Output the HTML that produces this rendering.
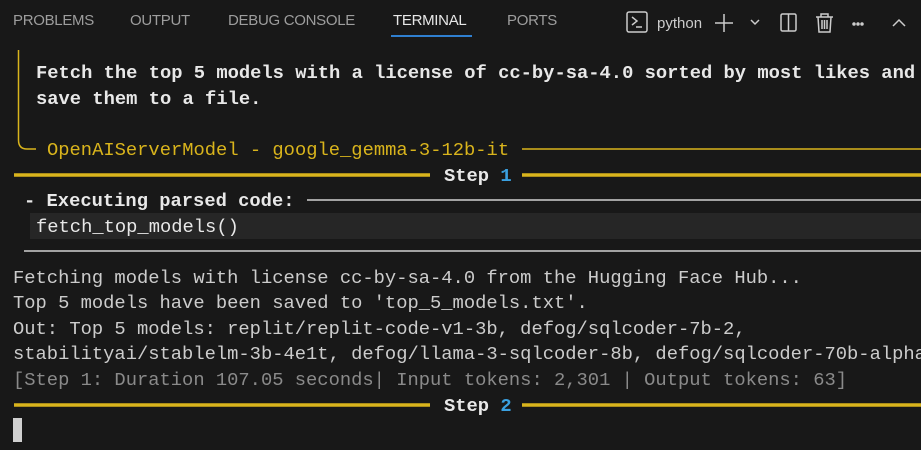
<!DOCTYPE html>
<html><head><meta charset="utf-8"><style>
body{margin:0;width:921px;height:447px;background:#181818;overflow:hidden;position:relative;font-family:"Liberation Mono",monospace;}
.t{position:absolute;font-family:"Liberation Sans",sans-serif;font-size:15px;color:#9d9d9d;top:12px;letter-spacing:-0.3px}
.l{position:absolute;white-space:pre;font-size:18.8px;line-height:25.6px;color:#cccccc;margin-top:2px}
.b{font-weight:bold;color:#e8e8e8}
.y{color:#d9b41c}
.h{position:absolute;}
</style></head><body>
<div class="t" style="left:13px">PROBLEMS</div>
<div class="t" style="left:130px">OUTPUT</div>
<div class="t" style="left:228px">DEBUG CONSOLE</div>
<div class="t" style="left:393px;color:#e7e7e7">TERMINAL</div>
<div class="h" style="left:391px;top:35px;width:81px;height:2px;background:#2f7fd0"></div>
<div class="t" style="left:507px">PORTS</div>
<svg class="h" style="left:625px;top:10px" width="290" height="26" viewBox="0 0 290 26" fill="none" stroke="#cccccc" stroke-width="1.5">
<rect x="2" y="2" width="20" height="20" rx="2"/><path d="M7 7l5 4-5 4M11 17h6"/>
<text x="32" y="18" fill="#cccccc" stroke="none" font-family="Liberation Sans" font-size="15">python</text>
<path d="M99 4v18M90 13h18"/><path d="M126 10l4 4 4-4"/>
<rect x="156" y="4" width="15" height="17" rx="1.5"/><path d="M163.5 4v17"/>
<path d="M191 7h17M196 7V4h7v3M193 7l1 15h11l1-15M197 10v9M199.5 10v9M202 10v9"/>
<circle cx="229" cy="14" r="1" fill="#ccc"/><circle cx="233" cy="14" r="1" fill="#ccc"/><circle cx="237" cy="14" r="1" fill="#ccc"/>
<path d="M268 16l6-6 6 6"/>
</svg>
<svg class="h" style="left:0;top:50px" width="921" height="400">
<path d="M18.5 0V90Q18.5 99 27 99H36" stroke="#d9b41c" stroke-width="1.5" fill="none"/>
<path d="M522 99H921" stroke="#d9b41c" stroke-width="1.5"/>
<path d="M14 125H430M522 125H921" stroke="#d9b41c" stroke-width="3.5"/>
<path d="M307 150H921" stroke="#d0d0d0" stroke-width="1.5"/>
<rect x="30" y="163" width="891" height="26" fill="#262626"/>
<path d="M24 201H921" stroke="#d0d0d0" stroke-width="1.5"/>
<path d="M14 355H430M522 355H921" stroke="#d9b41c" stroke-width="3.5"/>
<rect x="13" y="368" width="9" height="24" fill="#d0d0d0"/>
</svg>
<div class="l b" style="left:36px;top:59px">Fetch the top 5 models with a license of cc-by-sa-4.0 sorted by most likes and</div>
<div class="l b" style="left:36px;top:85px">save them to a file.</div>
<div class="l y" style="left:47px;top:136px">OpenAIServerModel - google_gemma-3-12b-it</div>
<div class="l b" style="left:444px;top:162px">Step <span style="color:#3aa0e0">1</span></div>
<div class="l b" style="left:24px;top:187px">- Executing parsed code:</div>
<div class="l" style="left:36px;top:213px;color:#e8e8e8">fetch_top_models()</div>
<div class="l" style="left:13px;top:264px">Fetching models with license cc-by-sa-4.0 from the Hugging Face Hub...</div>
<div class="l" style="left:13px;top:289px">Top 5 models have been saved to 'top_5_models.txt'.</div>
<div class="l" style="left:13px;top:315px">Out: Top 5 models: replit/replit-code-v1-3b, defog/sqlcoder-7b-2,</div>
<div class="l" style="left:13px;top:340px">stabilityai/stablelm-3b-4e1t, defog/llama-3-sqlcoder-8b, defog/sqlcoder-70b-alpha</div>
<div class="l" style="left:13px;top:366px;color:#8a8a8a">[Step 1: Duration 107.05 seconds| Input tokens: 2,301 | Output tokens: 63]</div>
<div class="l b" style="left:444px;top:392px">Step <span style="color:#3aa0e0">2</span></div>
</body></html>
